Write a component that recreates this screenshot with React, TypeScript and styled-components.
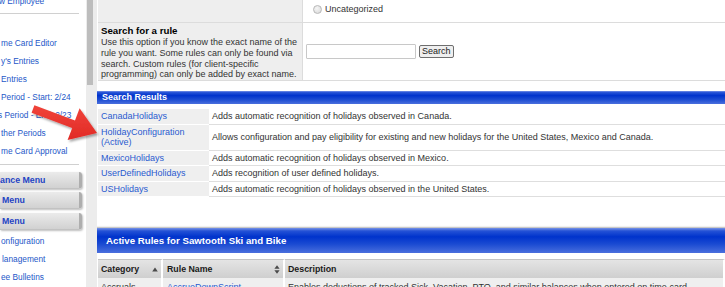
import React from "react";
import styled, { createGlobalStyle } from "styled-components";

const GlobalStyle = createGlobalStyle`
  html, body { margin: 0; padding: 0; background: #fff; }
  body { font-family: "Liberation Sans", Arial, sans-serif; overflow: hidden; }
  * { box-sizing: border-box; }
`;

const Page = styled.div`
  position: relative;
  display: flex;
  width: 725px;
  height: 287px;
  overflow: hidden;
  background: #fff;
`;

/* ---------- sidebar ---------- */
const Sidebar = styled.nav`
  width: 86px;
  flex: none;
  overflow: hidden;
  background: #fff;
`;

const SideScroll = styled.div`
  margin-top: -8px;
`;

const SideLink = styled.a<{ $gap?: number; $indent?: number }>`
  display: block;
  height: 18px;
  line-height: 18px;
  margin-top: ${(p) => p.$gap ?? 0}px;
  padding-left: 1px;
  text-indent: ${(p) => p.$indent ?? 0}px;
  font-size: 8.3px;
  color: #2457c8;
  text-decoration: none;
  white-space: nowrap;
`;

const SideRule = styled.div<{ $gap: number }>`
  margin-top: ${(p) => p.$gap}px;
  width: 79px;
  height: 1px;
  background: #d0d0d0;
`;

const SideButton = styled.div<{ $gap: number; $indent?: number }>`
  margin-top: ${(p) => p.$gap}px;
  width: 82px;
  height: 17px;
  line-height: 17px;
  padding-left: ${(p) => p.$indent ?? 0}px;
  font-size: 8.8px;
  font-weight: bold;
  color: #1f44c4;
  white-space: nowrap;
  background: linear-gradient(#ebebeb, #d1d1d1);
  border-right: 3px solid #aeaeae;
  border-bottom: 1px solid #c2c2c2;
  border-radius: 0 3px 3px 0;
  box-shadow: 1px 1px 2px rgba(0, 0, 0, 0.25);
`;

const Gutter = styled.div`
  width: 11px;
  flex: none;
  background: #ececec;
`;

const Thumb = styled.div`
  margin-left: 1px;
  width: 6px;
  height: 85px;
  background: #bdbdbd;
`;

/* ---------- main ---------- */
const Main = styled.main`
  flex: 1;
  min-width: 0;
  overflow: hidden;
  background: #fff;
  font-size: 9px;
  color: #333;
`;

const FormTable = styled.table`
  width: calc(100% - 1px);
  margin-left: 1px;
  border-collapse: separate;
  border-spacing: 0;
`;

const FormRow = styled.tr<{ $h: number }>`
  height: ${(p) => p.$h}px;
`;

const LabelCell = styled.td<{ $empty?: boolean }>`
  width: 204px;
  padding: ${(p) => (p.$empty ? "0" : "2px 3px 0")};
  vertical-align: top;
  background: #eeeeee;
  border-bottom: 1px solid #dcdcdc;
`;

const OptionCell = styled.td<{ $top?: boolean }>`
  padding: ${(p) => (p.$top ? "4px 0 0 10px" : "0 0 0 3px")};
  vertical-align: ${(p) => (p.$top ? "top" : "middle")};
  border-left: 1px solid #dcdcdc;
  border-bottom: 1px solid #dcdcdc;
`;

const RadioRow = styled.label`
  display: flex;
  align-items: center;
  gap: 3px;
  height: 10px;
  color: #333;
  font-size: 9px;
`;

const Radio = styled.span`
  width: 9px;
  height: 9px;
  border-radius: 50%;
  border: 1px solid #b8b8b8;
  background: radial-gradient(circle at 40% 35%, #f6f6f6, #d6d6d6);
`;

const RuleTitle = styled.div`
  font-size: 9.7px;
  line-height: 12px;
  font-weight: bold;
  color: #000;
`;

const RuleHelp = styled.div`
  font-size: 9px;
  line-height: 10.75px;
  color: #333;
  white-space: nowrap;
`;

const SearchRow = styled.div`
  display: flex;
  align-items: center;
  gap: 3px;
`;

const SearchInput = styled.input`
  width: 110px;
  height: 15px;
  margin: 0;
  padding: 0 2px;
  border: 1px solid #c8c8c8;
  border-radius: 1px;
  background: #fff;
  font-size: 9px;
`;

const SearchButton = styled.button`
  height: 13px;
  margin: 0;
  padding: 0 2px;
  border: 1px solid #6e6e6e;
  border-radius: 2px;
  background: #efefef;
  font-family: "Liberation Sans", Arial, sans-serif;
  font-size: 9px;
  line-height: 11px;
  color: #222;
`;

const BlueBar = styled.div<{ $gap: number; $h: number; $size: number; $indent: number }>`
  margin-top: ${(p) => p.$gap}px;
  height: ${(p) => p.$h}px;
  line-height: ${(p) => p.$h}px;
  padding-left: ${(p) => p.$indent}px;
  font-size: ${(p) => p.$size}px;
  font-weight: bold;
  color: #fff;
  white-space: nowrap;
  background: linear-gradient(#7893e6 0%, #2452d6 12%, #0033cc 35%, #1b4bd2 65%, #4a6fdd 100%);
`;

const ActiveBar = styled(BlueBar)`
  border-top: 1px solid #c8c8c8;
  box-shadow: 0 -1px 1px rgba(0, 0, 0, 0.06);
`;

const ResultsTable = styled.table`
  width: calc(100% - 1px);
  margin-top: 5px;
  margin-left: 1px;
  border-collapse: separate;
  border-spacing: 0;
`;

const NameCell = styled.td`
  width: 111px;
  padding: 2px 3px;
  line-height: 10.5px;
  vertical-align: middle;
  background: #efefef;
  border-bottom: 1px solid #fff;
`;

const DescCell = styled.td`
  padding: 2px 3px;
  line-height: 10.5px;
  vertical-align: middle;
  color: #333;
  white-space: nowrap;
  border-bottom: 1px solid #dedede;
`;

const RuleLink = styled.a`
  color: #2a5bd0;
  text-decoration: none;
`;

const ColumnsTable = styled.table`
  width: calc(100% - 1px);
  margin-top: 6px;
  margin-left: 1px;
  border-collapse: separate;
  border-spacing: 0;
  table-layout: fixed;
`;

const HeadCell = styled.th<{ $w?: number; $pl: number }>`
  width: ${(p) => (p.$w ? `${p.$w}px` : "auto")};
  height: 19px;
  padding: 0 3px 0 ${(p) => p.$pl}px;
  text-align: left;
  font-size: 8.8px;
  font-weight: bold;
  color: #1a1a1a;
  background: linear-gradient(#e4e4e4, #cfcfcf);
  border-top: 1px solid #c4c4c4;
  border-right: 2px solid #fff;
`;

const HeadInner = styled.div`
  display: flex;
  align-items: center;
  justify-content: space-between;
  white-space: nowrap;
`;

const BodyCell = styled.td<{ $pl: number }>`
  padding: 4px 3px 0 ${(p) => p.$pl}px;
  line-height: 11px;
  font-size: 9px;
  color: #333;
  white-space: nowrap;
  overflow: hidden;
  background: #efefef;
  border-right: 2px solid #fff;
`;

const Overlay = styled.svg`
  position: absolute;
  left: 0;
  top: 0;
  width: 725px;
  height: 287px;
  pointer-events: none;
`;

const SortUp = () => (
  <svg width="6" height="5" viewBox="0 0 6 5">
    <polygon points="3,0.5 5.8,4.5 0.2,4.5" fill="#4a4a4a" />
  </svg>
);

const SortBoth = () => (
  <svg width="6" height="9" viewBox="0 0 6 9">
    <polygon points="3,0.3 5.6,3.8 0.4,3.8" fill="#4a4a4a" />
    <polygon points="3,8.7 5.6,5.2 0.4,5.2" fill="#4a4a4a" />
  </svg>
);

const results = [
  { name: ["CanadaHolidays"], desc: "Adds automatic recognition of holidays observed in Canada." },
  {
    name: ["HolidayConfiguration", "(Active)"],
    desc: "Allows configuration and pay eligibility for existing and new holidays for the United States, Mexico and Canada.",
  },
  { name: ["MexicoHolidays"], desc: "Adds automatic recognition of holidays observed in Mexico." },
  { name: ["UserDefinedHolidays"], desc: "Adds recognition of user defined holidays." },
  { name: ["USHolidays"], desc: "Adds automatic recognition of holidays observed in the United States." },
];

const topLinks = [
  { text: "me Card Editor", indent: 0 },
  { text: "y's Entries", indent: 0 },
  { text: " Entries", indent: 0 },
  { text: " Period - Start: 2/24", indent: 0 },
  { text: "s Period - End: 2/23", indent: -3 },
  { text: "ther Periods", indent: 0 },
  { text: "me Card Approval", indent: 0 },
];

export default function App() {
  return (
    <>
      <GlobalStyle />
      <Page>
        <Sidebar>
          <SideScroll>
            <SideLink $indent={-2}>w Employee</SideLink>
            <SideRule $gap={3} />
            {topLinks.map((l, i) => (
              <SideLink key={l.text} $gap={i === 0 ? 20 : 0} $indent={l.indent}>
                {l.text}
              </SideLink>
            ))}
            <SideRule $gap={4} />
            <SideButton $gap={7}>ance Menu</SideButton>
            <SideButton $gap={3} $indent={2}>Menu</SideButton>
            <SideButton $gap={4} $indent={2}>Menu</SideButton>
            <SideLink $gap={2}>onfiguration</SideLink>
            <SideLink $indent={1}>lanagement</SideLink>
            <SideLink>ee Bulletins</SideLink>
          </SideScroll>
        </Sidebar>
        <Gutter>
          <Thumb />
        </Gutter>
        <Main>
          <FormTable>
            <tbody>
              <FormRow $h={23}>
                <LabelCell $empty />
                <OptionCell $top>
                  <RadioRow>
                    <Radio />
                    Uncategorized
                  </RadioRow>
                </OptionCell>
              </FormRow>
              <FormRow $h={58}>
                <LabelCell>
                  <RuleTitle>Search for a rule</RuleTitle>
                  <RuleHelp>
                    Use this option if you know the exact name of the
                    <br />
                    rule you want. Some rules can only be found via
                    <br />
                    search. Custom rules (for client-specific
                    <br />
                    programming) can only be added by exact name.
                  </RuleHelp>
                </LabelCell>
                <OptionCell>
                  <SearchRow>
                    <SearchInput type="text" />
                    <SearchButton type="button">Search</SearchButton>
                  </SearchRow>
                </OptionCell>
              </FormRow>
            </tbody>
          </FormTable>

          <BlueBar $gap={10} $h={13} $size={9} $indent={5}>
            Search Results
          </BlueBar>

          <ResultsTable>
            <tbody>
              {results.map((r) => (
                <tr key={r.name[0]}>
                  <NameCell>
                    <RuleLink>
                      {r.name.map((n, i) => (
                        <React.Fragment key={n}>
                          {i > 0 && <br />}
                          {n}
                        </React.Fragment>
                      ))}
                    </RuleLink>
                  </NameCell>
                  <DescCell>{r.desc}</DescCell>
                </tr>
              ))}
            </tbody>
          </ResultsTable>

          <ActiveBar $gap={30} $h={26} $size={9.7} $indent={9}>
            Active Rules for Sawtooth Ski and Bike
          </ActiveBar>

          <ColumnsTable>
            <thead>
              <tr>
                <HeadCell $w={65} $pl={3}>
                  <HeadInner>
                    Category
                    <SortUp />
                  </HeadInner>
                </HeadCell>
                <HeadCell $w={122} $pl={4}>
                  <HeadInner>
                    Rule Name
                    <SortBoth />
                  </HeadInner>
                </HeadCell>
                <HeadCell $pl={3}>Description</HeadCell>
              </tr>
            </thead>
            <tbody>
              <tr>
                <BodyCell $pl={3}>Accruals</BodyCell>
                <BodyCell $pl={4}>
                  <RuleLink>AccrueDownScript</RuleLink>
                </BodyCell>
                <BodyCell $pl={3}>
                  Enables deductions of tracked Sick, Vacation, PTO, and similar balances when entered on time card.
                </BodyCell>
              </tr>
            </tbody>
          </ColumnsTable>
        </Main>

        <Overlay viewBox="0 0 725 287">
          <defs>
            <filter id="arrowShadow" x="-20%" y="-20%" width="140%" height="140%">
              <feDropShadow dx="1.5" dy="2" stdDeviation="1.2" floodColor="#000" floodOpacity="0.35" />
            </filter>
            <linearGradient id="arrowFill" x1="0" y1="0" x2="0" y2="1">
              <stop offset="0" stopColor="#f0443a" />
              <stop offset="1" stopColor="#e12a26" />
            </linearGradient>
          </defs>
          <polygon
            points="34.4,105.3 75,120.5 79.6,108.3 97,133 67.6,140.1 72.2,128 31.6,112.8"
            fill="url(#arrowFill)"
            filter="url(#arrowShadow)"
          />
        </Overlay>
      </Page>
    </>
  );
}
